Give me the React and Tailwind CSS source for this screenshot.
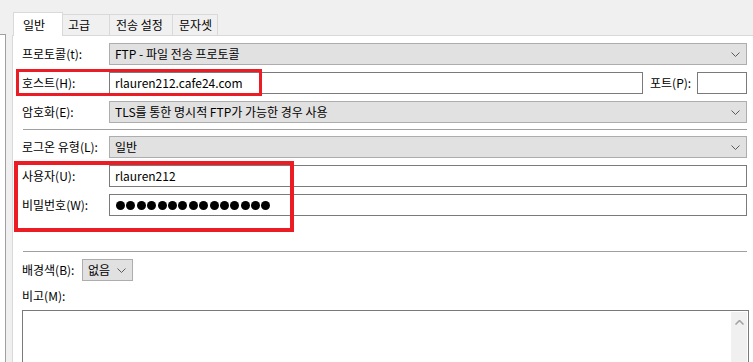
import React from "react";

const FONT = { fontFamily: '"Noto Sans CJK KR", "Noto Sans", sans-serif' };

function Chevron({ className = "" }) {
  return (
    <svg width="9" height="5" viewBox="0 0 9 5" className={className}>
      <path d="M0.5 0.5 L4.5 4.5 L8.5 0.5" fill="none" stroke="#5a5a5a" strokeWidth="1" />
    </svg>
  );
}

function Select({ text, className = "" }) {
  return (
    <div className={"h-[22px] flex items-center bg-[#e1e1e1] border border-[#adadad] pl-[5px] pr-[6px] " + className}>
      <span className="flex-1 text-[12px] leading-none text-black whitespace-nowrap">{text}</span>
      <Chevron />
    </div>
  );
}

function Input({ children, className = "" }) {
  return (
    <div className={"h-[22px] flex items-center bg-white border border-[#7a7a7a] pl-[5px] " + className}>
      {children}
    </div>
  );
}

function Row({ label, children }) {
  return (
    <div className="flex items-center h-[22px]">
      <div className="w-[87px] text-[12px] leading-none text-black whitespace-nowrap">{label}</div>
      <div className="flex-1 flex items-center">{children}</div>
    </div>
  );
}

export default function App() {
  return (
    <div className="w-[753px] h-[362px] bg-[#f0f0f0] relative overflow-hidden flex" style={FONT}>
      {/* left sliver of neighbouring panel */}
      <div className="w-[6px] mt-[34px] bg-white border-t border-r border-[#a0a0a0] shrink-0" />
      <div className="w-[6px] shrink-0" />
      <div className="flex-1 flex flex-col">
        {/* tabs */}
        <div className="h-[35px] flex items-end pl-[1px] relative z-10">
          <div className="w-[50px] h-[23px] bg-white border border-b-0 border-[#d9d9d9] flex items-center pl-[9px] text-[12px] leading-none -mb-[1px] h-[24px]">
            일반
          </div>
          <div className="w-[47px] h-[21px] bg-[#f0f0f0] border border-l-0 border-b-0 border-[#d9d9d9] flex items-center pl-[5px] text-[12px] leading-none">
            고급
          </div>
          <div className="w-[63px] h-[21px] bg-[#f0f0f0] border border-l-0 border-b-0 border-[#d9d9d9] flex items-center pl-[6px] text-[12px] leading-none">
            전송 설정
          </div>
          <div className="w-[45px] h-[21px] bg-[#f0f0f0] border border-l-0 border-b-0 border-[#d9d9d9] flex items-center pl-[6px] text-[12px] leading-none">
            문자셋
          </div>
        </div>
        {/* panel */}
        <div className="flex-1 bg-white border-t border-l border-[#d9d9d9] pl-[9px] pr-[6px] pt-[7px] flex flex-col">
          <div className="flex flex-col gap-[7px]">
            <Row label="프로토콜(t):">
              <Select text="FTP - 파일 전송 프로토콜" className="flex-1" />
            </Row>
            <Row label="호스트(H):">
              <Input className="w-[534px]">
                <span className="text-[12px] leading-none">rlauren212.cafe24.com</span>
              </Input>
              <span className="ml-[7px] w-[47px] text-[12px] leading-none whitespace-nowrap">포트(P):</span>
              <Input className="flex-1" />
            </Row>
            <Row label="암호화(E):">
              <Select text="TLS를 통한 명시적 FTP가 가능한 경우 사용" className="flex-1" />
            </Row>
          </div>
          <div className="h-px bg-[#a0a0a0] my-[6px] ml-px" />
          <div className="flex flex-col gap-[7px]">
            <Row label="로그온 유형(L):">
              <Select text="일반" className="flex-1" />
            </Row>
            <Row label="사용자(U):">
              <Input className="flex-1">
                <span className="text-[12px] leading-none">rlauren212</span>
              </Input>
            </Row>
            <Row label="비밀번호(W):">
              <Input className="flex-1">
                <div className="flex gap-[1.4px] pl-px">
                  {Array.from({ length: 15 }).map((_, i) => (
                    <span key={i} className="w-[9px] h-[9px] rounded-full bg-black inline-block" />
                  ))}
                </div>
              </Input>
            </Row>
          </div>
          <div className="h-px bg-[#a0a0a0] mt-[35px] mb-[7px] ml-px" />
          <div className="flex items-center h-[22px]">
            <span className="w-[60px] text-[12px] leading-none whitespace-nowrap">배경색(B):</span>
            <Select text="없음" className="w-[51px]" />
          </div>
          <div className="mt-[8px] text-[12px] leading-[14px]">비고(M):</div>
          <div className="mt-[7px] flex-1 border border-[#7a7a7a] border-b-0 mr-[-2px] flex justify-end pt-px pr-px">
            <div className="w-[16px] h-full bg-[#f0f0f0] flex justify-center pt-[8px]">
              <svg width="9" height="5" viewBox="0 0 9 5">
                <path d="M0.5 4.5 L4.5 0.5 L8.5 4.5" fill="none" stroke="#a0a0a0" strokeWidth="1.5" />
              </svg>
            </div>
          </div>
        </div>
      </div>
      {/* red annotation boxes */}
      <div className="absolute left-[16px] top-[69px] w-[246px] h-[27px] border-[3px] border-[#ec1c24]" />
      <div className="absolute left-[14px] top-[161px] w-[280px] h-[71px] border-[4px] border-[#ec1c24]" />
    </div>
  );
}
